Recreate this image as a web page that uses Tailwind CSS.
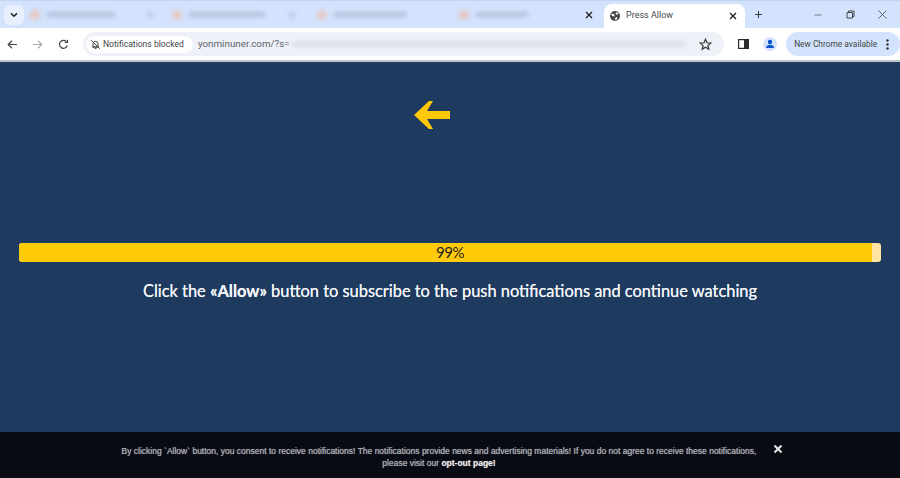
<!DOCTYPE html>
<html lang="en">
<head>
<meta charset="UTF-8">
<title>Press Allow</title>
<script src="https://cdn.jsdelivr.net/npm/@tailwindcss/browser@4"></script>
</head>
<body class="w-[900px] h-[478px] overflow-hidden flex flex-col bg-[#1e3a5f] font-['Roboto',sans-serif]">
    <!-- tab strip -->
    <header class="h-[28px] bg-[#d3e3fd] flex items-end shrink-0 border-t border-[#c3d4ee]">
        <div class="w-[27px] h-[27px] flex items-center justify-center">
            <div class="w-[20px] h-[20px] rounded-md bg-[#e8f0fe] flex items-center justify-center">
                <svg width="8" height="6" viewBox="0 0 8 6" fill="none" stroke="#1f1f1f" stroke-width="1.6"><path d="M1 1.2 4 4.2 7 1.2"/></svg>
            </div>
        </div>
        <div class="w-[577px] h-[27px] flex items-center">
            <div class="w-[145px] flex items-center pl-[3px] blur-[2px]">
                <div class="w-[10px] h-[10px] rounded-full bg-[#e6c8c4]"></div>
                <div class="ml-[7px] w-[68px] h-[5px] bg-[#b4c1da]"></div>
                <div class="ml-[32px] w-[6px] h-[6px] bg-[#bccbe6]"></div>
            </div>
            <div class="w-[145px] flex items-center blur-[2px]">
                <div class="w-[10px] h-[10px] rounded-full bg-[#e6c8c4]"></div>
                <div class="ml-[7px] w-[76px] h-[5px] bg-[#b4c1da]"></div>
                <div class="ml-[24px] w-[6px] h-[6px] bg-[#bccbe6]"></div>
            </div>
            <div class="w-[142px] flex items-center blur-[2px]">
                <div class="w-[10px] h-[10px] rounded-full bg-[#e6c8c4]"></div>
                <div class="ml-[7px] w-[72px] h-[5px] bg-[#b4c1da]"></div>
            </div>
            <div class="w-[98px] flex items-center blur-[2px]">
                <div class="w-[10px] h-[10px] rounded-full bg-[#e6c8c4]"></div>
                <div class="ml-[7px] w-[52px] h-[5px] bg-[#b4c1da]"></div>
            </div>
            <svg class="ml-[28px]" width="8" height="8" viewBox="0 0 8 8" stroke="#1f1f1f" stroke-width="1.3"><path d="M1 1 7 7M7 1 1 7"/></svg>
        </div>
        <div class="w-[141px] h-[24px] bg-white rounded-t-lg flex items-center pl-[6px] pr-[8px] text-[9px] text-[#444746]">
            <svg width="10" height="10" viewBox="0 0 10 10"><circle cx="5" cy="5" r="5" fill="#454746"/><path d="M2 2.5 4.5 3.5 4.5 5.5 2.5 5 1 3.5ZM5 7 7 6 7.5 7.5 5.5 9.5ZM6 1 8.5 2.5 7 4 5.5 2.5Z" fill="#fff"/></svg>
            <span class="ml-[6px]">Press Allow</span>
            <svg class="ml-auto" width="8" height="8" viewBox="0 0 8 8" stroke="#1f1f1f" stroke-width="1.3"><path d="M1 1 7 7M7 1 1 7"/></svg>
        </div>
        <div class="flex-1 h-[27px] flex items-center">
            <svg class="ml-[9px]" width="9" height="9" viewBox="0 0 9 9" stroke="#3c4043" stroke-width="1.1"><path d="M4.5 1V8M1 4.5H8"/></svg>
            <svg class="ml-[51px]" width="8" height="8" viewBox="0 0 8 8" stroke="#7b818a" stroke-width="1"><path d="M0.5 4H7.5"/></svg>
            <svg class="ml-[24px]" width="9" height="9" viewBox="0 0 9 9" fill="none" stroke="#454746" stroke-width="1"><path d="M2.5 2.5V1H8V6.5H6.5M1 2.5H6.5V8H1Z"/></svg>
            <svg class="ml-[23px]" width="9" height="9" viewBox="0 0 9 9" stroke="#5f6368" stroke-width="1"><path d="M0.5 0.5 8.5 8.5M8.5 0.5 0.5 8.5"/></svg>
        </div>
    </header>

    <!-- toolbar -->
    <div class="h-[34px] bg-white flex items-center shrink-0 border-b-2 border-[#bcc6cc]">
        <svg class="ml-[7px]" width="11" height="11" viewBox="0 0 11 11" fill="none" stroke="#444746" stroke-width="1.2"><path d="M10 5.5H1.2M5 1.7 1.2 5.5 5 9.3"/></svg>
        <svg class="ml-[14px]" width="11" height="11" viewBox="0 0 11 11" fill="none" stroke="#a9acaf" stroke-width="1.2"><path d="M1 5.5H9.8M6 1.7 9.8 5.5 6 9.3"/></svg>
        <svg class="ml-[15px]" width="11" height="11" viewBox="0 0 11 11" fill="none" stroke="#444746" stroke-width="1.2"><path d="M9.3 6.5A4 4 0 1 1 8.4 2.6"/><path d="M9.5 0.8V3.5H6.8" /></svg>
        <div class="ml-[14px] w-[642px] h-[24px] rounded-full bg-[#eef1f8] flex items-center pl-[3px] pr-[12px]">
            <div class="h-[17px] w-[107px] rounded-full bg-white flex items-center pl-[4px] text-[8.6px] text-[#444746] shrink-0">
                <svg width="11" height="11" viewBox="0 0 11 11" fill="none" stroke="#444746" stroke-width="1"><path d="M3 8V4.8A2.5 2.5 0 0 1 8 4.8V8ZM2 8H9M4.6 9.6H6.4M1.2 1.2 9.8 9.8"/></svg>
                <span class="ml-[2px] pt-[1px] whitespace-nowrap">Notifications blocked</span>
            </div>
            <span class="ml-[5px] text-[9.8px] text-[#5f6368] whitespace-nowrap">yonminuner.com/?s=</span>
            <div class="ml-[3px] flex-1 h-[6px] bg-[#d8dce4] blur-[2.5px]"></div>
            <svg class="ml-[14px]" width="13" height="13" viewBox="0 0 13 13" fill="none" stroke="#333" stroke-width="1.2"><path d="M6.5 1.3 8 4.8 11.8 5.1 8.9 7.6 9.8 11.3 6.5 9.3 3.2 11.3 4.1 7.6 1.2 5.1 5 4.8Z"/></svg>
        </div>
        <svg class="ml-[14px]" width="11" height="10" viewBox="0 0 11 10"><rect x="0.6" y="0.6" width="9.8" height="8.8" fill="none" stroke="#2b2b2b" stroke-width="1.2"/><rect x="6" y="0.6" width="4.4" height="8.8" fill="#2b2b2b"/></svg>
        <div class="ml-[14px] w-[14px] h-[14px] rounded-full bg-[#d3e3fd] flex items-center justify-center">
            <svg width="10" height="10" viewBox="0 0 10 10" fill="#0b57d0"><circle cx="5" cy="3" r="2.2"/><path d="M1 9C1 6.5 3 5.8 5 5.8S9 6.5 9 9Z"/></svg>
        </div>
        <div class="ml-[9px] w-[114px] h-[24px] rounded-full bg-[#d3e3fd] flex items-center pl-[8px] text-[8.4px] text-[#444746] whitespace-nowrap">
            <span class="pt-[1px]">New Chrome available</span>
            <svg class="ml-auto mr-[11px]" width="3" height="11" viewBox="0 0 3 11" fill="#333"><circle cx="1.5" cy="1.5" r="1.2"/><circle cx="1.5" cy="5.5" r="1.2"/><circle cx="1.5" cy="9.5" r="1.2"/></svg>
        </div>
    </div>

    <!-- page -->
    <main class="flex-1 bg-[#1e3a5f] flex flex-col items-center font-['Lato',sans-serif]">
        <svg class="mt-[38px] ml-[-36px]" width="36" height="30" viewBox="0 0 36 30" fill="#ffc808"><path d="M0 15 15 1 19 1 13 11H36V19H13L19 29H15Z"/></svg>
        <div class="mt-[113px] w-[862px] h-[19px] rounded-[3px] bg-[#ffe6a0] overflow-hidden relative">
            <div class="h-full w-[853px] bg-[#ffcb09] rounded-l-[3px]"></div>
            <span class="absolute inset-0 flex items-center justify-center text-[15px] tracking-[-0.5px] text-[#222]">99%</span>
        </div>
        <p class="mt-[17px] text-[16.4px] leading-[24px] text-[#f2f4f7] whitespace-nowrap [text-shadow:0_0_0.5px_#f2f4f7]">Click the <b>«Allow»</b> button to subscribe to the push notifications and continue watching</p>
    </main>

    <!-- consent bar -->
    <footer class="h-[46px] bg-[#090b14] shrink-0 relative pt-[13px] pr-[22px] font-['Liberation_Sans',sans-serif]">
        <p class="w-[640px] mx-auto text-center text-[8.5px] leading-[12px] text-[#a9abb0] [text-shadow:0_0_0.8px_#a9abb0]">By clicking `Allow` button, you consent to receive notifications! The notifications provide news and advertising materials! If you do not agree to receive these notifications, please visit our <a href="#" class="text-[#e8e8e8] font-bold">opt-out page!</a></p>
        <svg class="absolute left-[774px] top-[13px]" width="8" height="8" viewBox="0 0 8 8" stroke="#e8e8e8" stroke-width="2"><path d="M0.5 0.5 7.5 7.5M7.5 0.5 0.5 7.5"/></svg>
    </footer>
</body>
</html>
